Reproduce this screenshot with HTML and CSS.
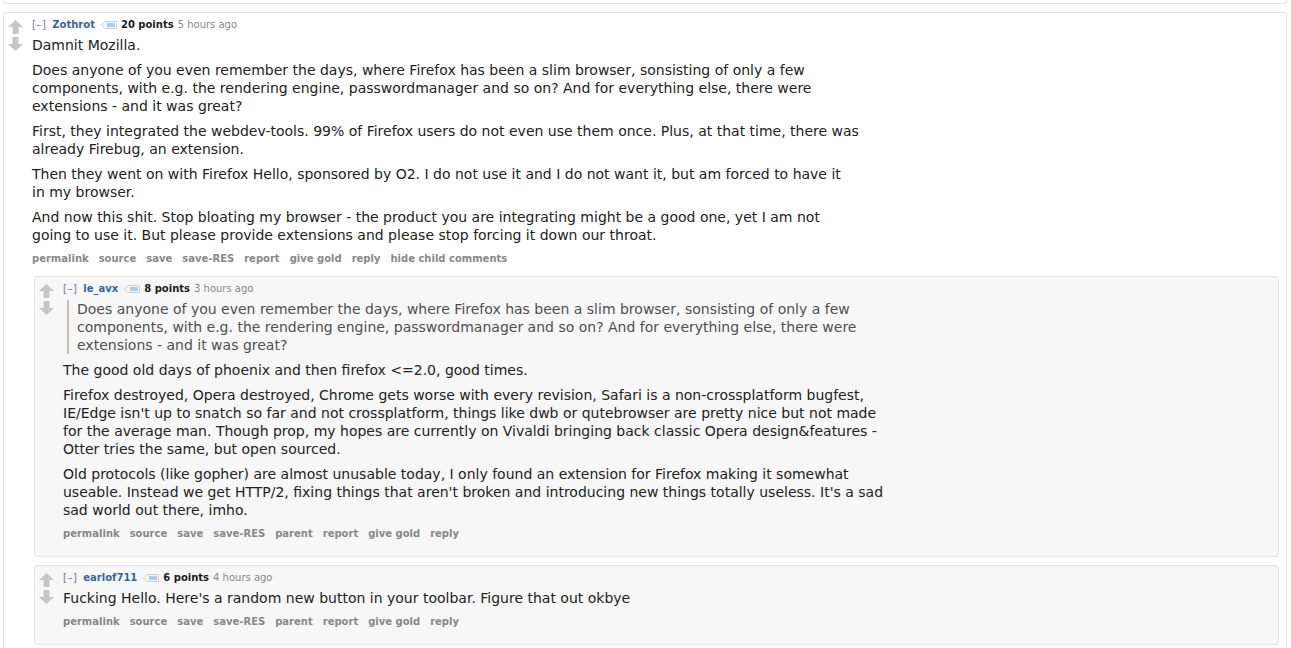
FILE: index.html
```html
<!DOCTYPE html>
<html>
<head>
<meta charset="utf-8">
<link rel="stylesheet" href="styles.css">
</head>
<body>
<div class="prev"></div>

<div class="comment top">
  <div class="midcol">
    <svg class="arrow up" viewBox="0 0 15 14" width="15" height="14"><polygon points="7.5,0 15,7 10.5,7 10.5,14 4.5,14 4.5,7 0,7"/></svg>
    <svg class="arrow down" viewBox="0 0 15 14" width="15" height="14"><polygon points="7.5,14 15,7 10.5,7 10.5,0 4.5,0 4.5,7 0,7"/></svg>
  </div>
  <div class="entry">
    <p class="tagline">
      <span class="expand">[–]</span>
      <span class="author">Zothrot</span>
      <svg class="tag" viewBox="0 0 16 8" width="16" height="8"><polygon points="0.5,4 4,0.5 15.5,0.5 15.5,7.5 4,7.5"/><rect x="6" y="2" width="8" height="4"/></svg>
      <span class="score">20 points</span>
      <span class="time">5 hours ago</span>
    </p>
    <div class="md">
      <p>Damnit Mozilla.</p>
      <p>Does anyone of you even remember the days, where Firefox has been a slim browser, sonsisting of only a few<br>components, with e.g. the rendering engine, passwordmanager and so on? And for everything else, there were<br>extensions - and it was great?</p>
      <p>First, they integrated the webdev-tools. 99% of Firefox users do not even use them once. Plus, at that time, there was<br>already Firebug, an extension.</p>
      <p>Then they went on with Firefox Hello, sponsored by O2. I do not use it and I do not want it, but am forced to have it<br>in my browser.</p>
      <p>And now this shit. Stop bloating my browser - the product you are integrating might be a good one, yet I am not<br>going to use it. But please provide extensions and please stop forcing it down our throat.</p>
    </div>
    <ul class="buttons">
      <li>permalink</li><li>source</li><li>save</li><li>save-RES</li><li>report</li><li>give gold</li><li>reply</li><li>hide child comments</li>
    </ul>

    <div class="children">
      <div class="comment child">
        <div class="midcol">
          <svg class="arrow up" viewBox="0 0 15 14" width="15" height="14"><polygon points="7.5,0 15,7 10.5,7 10.5,14 4.5,14 4.5,7 0,7"/></svg>
          <svg class="arrow down" viewBox="0 0 15 14" width="15" height="14"><polygon points="7.5,14 15,7 10.5,7 10.5,0 4.5,0 4.5,7 0,7"/></svg>
        </div>
        <div class="entry">
          <p class="tagline">
            <span class="expand visited">[–]</span>
            <span class="author">le_avx</span>
            <svg class="tag" viewBox="0 0 16 8" width="16" height="8"><polygon points="0.5,4 4,0.5 15.5,0.5 15.5,7.5 4,7.5"/><rect x="6" y="2" width="8" height="4"/></svg>
            <span class="score">8 points</span>
            <span class="time">3 hours ago</span>
          </p>
          <div class="md">
            <blockquote><p>Does anyone of you even remember the days, where Firefox has been a slim browser, sonsisting of only a few<br>components, with e.g. the rendering engine, passwordmanager and so on? And for everything else, there were<br>extensions - and it was great?</p></blockquote>
            <p>The good old days of phoenix and then firefox &lt;=2.0, good times.</p>
            <p>Firefox destroyed, Opera destroyed, Chrome gets worse with every revision, Safari is a non-crossplatform bugfest,<br>IE/Edge isn't up to snatch so far and not crossplatform, things like dwb or qutebrowser are pretty nice but not made<br>for the average man. Though prop, my hopes are currently on Vivaldi bringing back classic Opera design&amp;features -<br>Otter tries the same, but open sourced.</p>
            <p>Old protocols (like gopher) are almost unusable today, I only found an extension for Firefox making it somewhat<br>useable. Instead we get HTTP/2, fixing things that aren't broken and introducing new things totally useless. It's a sad<br>sad world out there, imho.</p>
          </div>
          <ul class="buttons">
            <li>permalink</li><li>source</li><li>save</li><li>save-RES</li><li>parent</li><li>report</li><li>give gold</li><li>reply</li>
          </ul>
        </div>
      </div>

      <div class="comment child">
        <div class="midcol">
          <svg class="arrow up" viewBox="0 0 15 14" width="15" height="14"><polygon points="7.5,0 15,7 10.5,7 10.5,14 4.5,14 4.5,7 0,7"/></svg>
          <svg class="arrow down" viewBox="0 0 15 14" width="15" height="14"><polygon points="7.5,14 15,7 10.5,7 10.5,0 4.5,0 4.5,7 0,7"/></svg>
        </div>
        <div class="entry">
          <p class="tagline">
            <span class="expand visited">[–]</span>
            <span class="author">earlof711</span>
            <svg class="tag" viewBox="0 0 16 8" width="16" height="8"><polygon points="0.5,4 4,0.5 15.5,0.5 15.5,7.5 4,7.5"/><rect x="6" y="2" width="8" height="4"/></svg>
            <span class="score">6 points</span>
            <span class="time">4 hours ago</span>
          </p>
          <div class="md">
            <p>Fucking Hello. Here's a random new button in your toolbar. Figure that out okbye</p>
          </div>
          <ul class="buttons">
            <li>permalink</li><li>source</li><li>save</li><li>save-RES</li><li>parent</li><li>report</li><li>give gold</li><li>reply</li>
          </ul>
        </div>
      </div>
    </div>
  </div>
</div>
</body>
</html>
```

FILE: styles.css
```css
html, body {
  margin: 0;
  padding: 0;
  background: #ffffff;
}

body {
  font-family: "DejaVu Sans", Verdana, sans-serif;
  color: #222222;
  overflow: hidden;
  height: 648px;
}

.prev {
  margin: 0 4px 0 3px;
  height: 3px;
  border: 1px solid #e4e4e4;
  border-top: none;
  border-radius: 0 0 3px 3px;
}

.comment {
  display: flex;
  border: 1px solid #e4e4e4;
  border-radius: 3px;
}

.comment.top {
  margin: 8px 4px 0 3px;
  background: #ffffff;
  min-height: 700px;
}

.comment.child {
  background: #f7f7f7;
  margin-right: 7px;
  margin-bottom: 8px;
  padding-bottom: 15px;
}

.midcol {
  width: 28px;
  flex: none;
  display: flex;
  flex-direction: column;
  align-items: flex-start;
  padding-top: 7px;
  padding-left: 4px;
  box-sizing: border-box;
}

.arrow {
  display: block;
  fill: #c6c6c6;
}

.arrow.down {
  margin-top: 3px;
}

.entry {
  flex: 1;
  padding-top: 5px;
  min-width: 0;
}

.tagline {
  margin: 0;
  font-size: 10px;
  line-height: 14px;
  height: 14px;
  color: #888888;
  white-space: nowrap;
  display: flex;
  align-items: center;
}

.tagline .expand {
  color: #5f7ea6;
  margin-right: 6px;
  letter-spacing: 0.5px;
}

.tagline .expand.visited {
  color: #7c6fa8;
}

.tagline .author {
  color: #336699;
  font-weight: bold;
  margin-right: 6px;
}

.tag {
  display: block;
  margin-right: 4px;
}

.tag polygon {
  fill: #f4f4f4;
  stroke: #cfcfcf;
  stroke-width: 1;
}

.tag rect {
  fill: #a9cdea;
}

.tagline .score {
  color: #1a1a1b;
  font-weight: bold;
  margin-right: 4px;
}

.md {
  margin-top: 4px;
  padding-bottom: 1px;
  font-size: 14px;
  line-height: 18px;
  color: #222222;
}

.md p {
  margin: 0 0 7px 0;
  white-space: nowrap;
}

.md blockquote {
  margin: 0 0 7px 4px;
  padding: 0 0 0 8px;
  border-left: 2px solid #c5c1ad;
  color: #4f4f4f;
}

.md blockquote p {
  margin: 0;
}

.buttons {
  list-style: none;
  margin: 0;
  padding: 0;
  display: flex;
  gap: 10px;
  font-size: 10px;
  line-height: 14px;
  font-weight: bold;
  color: #888888;
  white-space: nowrap;
}

.children {
  margin-top: 10px;
  margin-left: 2px;
}
```
